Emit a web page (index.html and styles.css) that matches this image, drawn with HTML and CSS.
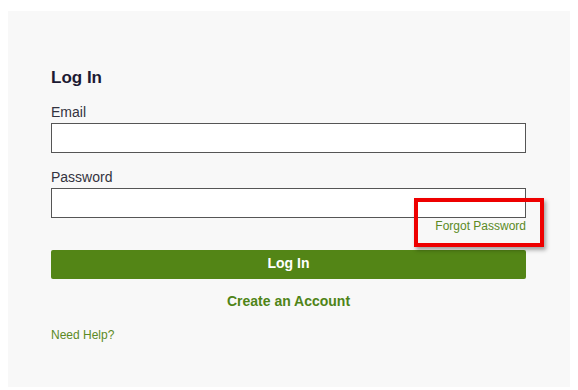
FILE: index.html
```html
<!DOCTYPE html>
<html>
<head>
<meta charset="utf-8">
<link rel="stylesheet" href="styles.css">
</head>
<body>
<div class="page">
  <div class="panel">
    <h1 class="title">Log In</h1>
    <label class="label label-email">Email</label>
    <div class="input"></div>
    <label class="label label-pass">Password</label>
    <div class="input"></div>
    <div class="forgot-row"><a class="forgot">Forgot Password</a></div>
    <button class="btn">Log In</button>
    <div class="create">Create an Account</div>
    <a class="help">Need Help?</a>
    <div class="highlight"></div>
  </div>
</div>
</body>
</html>
```

FILE: styles.css
```css
html, body {
  margin: 0;
  padding: 0;
  background: #ffffff;
  font-family: "Liberation Sans", Arial, sans-serif;
}
.page {
  padding: 11px 8px 3px 8px;
}
.panel {
  position: relative;
  background: #f8f8f8;
  height: 376px;
  box-sizing: border-box;
  padding: 57px 44px 0 43px;
  display: flex;
  flex-direction: column;
}
.title {
  margin: 0;
  font-size: 17px;
  line-height: 20px;
  font-weight: bold;
  color: #1c1a33;
}
.label {
  display: block;
  font-size: 14px;
  line-height: 16px;
  color: #333340;
}
.label-email { margin-top: 16px; }
.label-pass { margin-top: 16px; }
.input {
  margin-top: 3px;
  height: 30px;
  box-sizing: border-box;
  border: 1px solid #555555;
  background: #ffffff;
}
.forgot-row {
  display: flex;
  justify-content: flex-end;
  margin-top: 1px;
}
.forgot {
  font-size: 12px;
  line-height: 14px;
  color: #5b8a24;
}
.btn {
  margin-top: 17px;
  height: 29px;
  line-height: 27px;
  border: none;
  border-radius: 2px;
  background: #538516;
  color: #ffffff;
  font-family: "Liberation Sans", Arial, sans-serif;
  font-size: 14px;
  font-weight: bold;
  padding: 0 0 2px 0;
}
.create {
  margin-top: 14px;
  text-align: center;
  font-size: 14px;
  line-height: 16px;
  font-weight: bold;
  color: #4f8417;
}
.help {
  margin-top: 19px;
  font-size: 12px;
  line-height: 14px;
  color: #5b8a24;
}
.highlight {
  position: absolute;
  left: 406px;
  top: 187px;
  width: 130px;
  height: 49px;
  box-sizing: border-box;
  border: 4px solid #ee0000;
  box-shadow: 2px 3px 4px rgba(0,0,0,0.35);
}
```
